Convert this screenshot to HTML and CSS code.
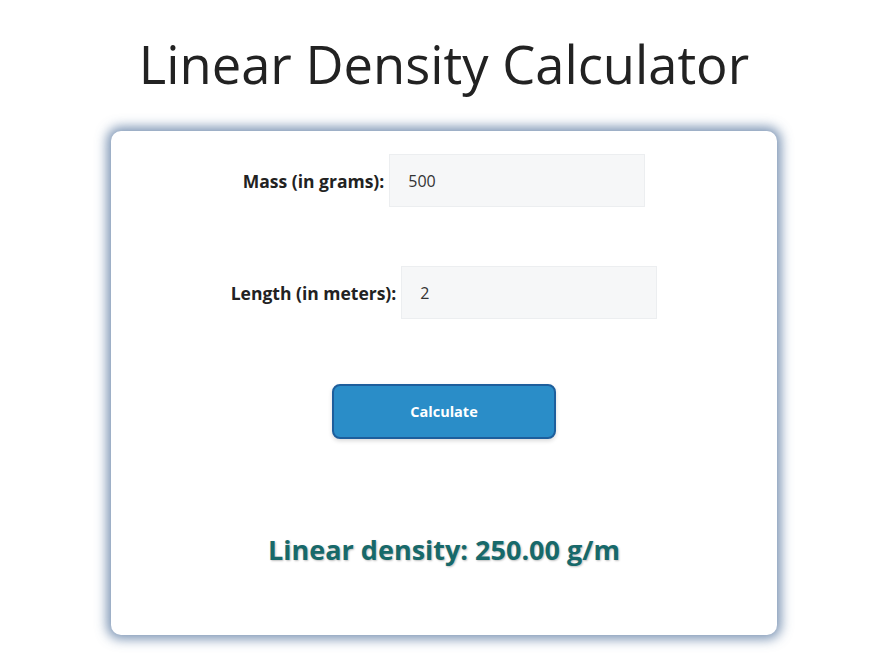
FILE: index.html
```html
<!DOCTYPE html>
<html lang="en">
<head>
    <meta charset="UTF-8">
    <meta name="viewport" content="width=device-width, initial-scale=1.0">
    <title>Linear Density Calculator</title>
    <link rel="stylesheet" href="styles.css">
</head>
<body>
    <h1 class="title">Linear Density Calculator</h1>

    <div class="calculator">
        <div class="form-row">
            <label for="mass">Mass (in grams):</label>
            <input type="number" id="mass" class="field" value="500">
        </div>

        <div class="form-row">
            <label for="length">Length (in meters):</label>
            <input type="number" id="length" class="field" value="2">
        </div>

        <button class="calc-btn">Calculate</button>

        <p class="result">Linear density: 250.00 g/m</p>
    </div>
</body>
</html>
```

FILE: styles.css
```css
body {
    font-family: "Open Sans", "Noto Sans", sans-serif;
    margin: 0;
    padding: 20px 0;
    background-color: #fff;
    color: #222;
}
.title {
    text-align: center;
    font-weight: 400;
    font-size: 52.5px;
    margin: 12px 0 36px;
    line-height: 1.2;
}
.calculator {
    width: 75%;
    margin: 0 auto;
    background: white;
    border-radius: 10px;
    box-shadow: 0 0 12px 4px rgba(70, 105, 150, 0.72);
    padding: 23px 0 67px;
    display: flex;
    flex-direction: column;
    align-items: center;
}
.form-row {
    display: flex;
    align-items: center;
    gap: 5px;
    margin-bottom: 59px;
}
.form-row label {
    font-weight: 700;
    font-size: 17.5px;
}
.field {
    width: 256px;
    height: 53px;
    box-sizing: border-box;
    padding: 0 18px;
    font-family: inherit;
    font-size: 16px;
    color: #333;
    background: #f6f7f8;
    border: 1px solid #eceef0;
    border-radius: 0;
}
.calc-btn {
    width: 224px;
    height: 55px;
    margin-top: 6px;
    background-color: #2a8dc8;
    color: white;
    border: 2px solid #1d5e9c;
    border-radius: 8px;
    font-family: inherit;
    font-weight: 700;
    font-size: 14.5px;
    box-shadow: 0 2px 4px rgba(0,0,0,0.15);
    cursor: pointer;
}
.result {
    margin: 92px 0 0;
    font-size: 27px;
    font-weight: 700;
    color: #17696a;
    text-shadow: 1px 1px 2px rgba(0,0,0,0.25);
}
```
